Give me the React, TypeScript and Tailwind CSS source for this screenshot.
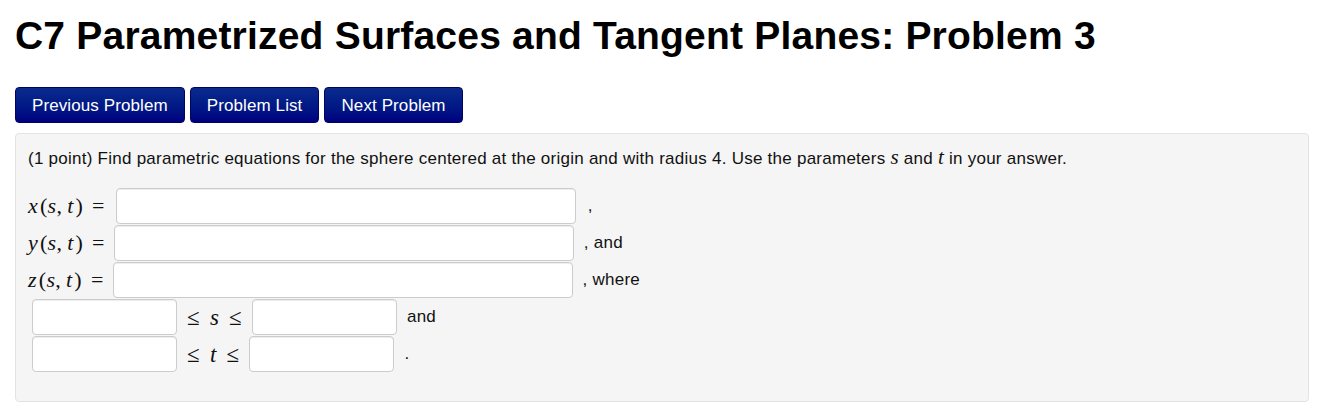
import React from "react"

const inputCls =
    "h-[36px] rounded-[4px] border border-[#cccccc] bg-white shadow-[inset_0_1px_1px_rgba(0,0,0,0.075)] outline-none"

const btnCls =
    "h-[36px] px-4 rounded-[4px] border border-[#00045c] bg-gradient-to-b from-[#0b2a8c] to-[#000080] text-white text-[17px] tracking-[0.1px] leading-none"

const mathCls = "font-['Liberation_Serif',serif] text-[22px] text-[#111] whitespace-nowrap leading-none"

function MathVar({ v }: { v: string }) {
    return <span className="italic">{v}</span>
}

function FuncLabel({ name }: { name: string }) {
    return (
        <span className={mathCls}>
            <MathVar v={name} />
            <span className="ml-[2px]">(</span>
            <MathVar v="s" />
            <span className="mr-[5px]">,</span>
            <MathVar v="t" />
            <span className="ml-[2px]">)</span>
            <span className="ml-[9px]">=</span>
        </span>
    )
}

function Bound({ v }: { v: string }) {
    return (
        <span className={`${mathCls} mx-[10px] text-[23px]`}>
            ≤<span className="mx-[10px]"><MathVar v={v} /></span>≤
        </span>
    )
}

export default function App() {
    return (
        <div className="min-h-[417px] bg-white font-['Liberation_Sans',Arial,sans-serif] text-[#000] pl-[15px]">
            <h1 className="pt-[15px] text-[39px] font-bold leading-[42px] tracking-[0.2px]">
                C7 Parametrized Surfaces and Tangent Planes: Problem 3
            </h1>

            <div className="mt-[30px] flex gap-[5px]">
                <button className={btnCls}>Previous Problem</button>
                <button className={btnCls}>Problem List</button>
                <button className={btnCls}>Next Problem</button>
            </div>

            <div className="mt-[10px] w-[1294px] h-[269px] rounded-[4px] border border-[#e3e3e3] bg-[#f5f5f5] px-[12px] pt-[13px] text-[17px] tracking-[0.25px] text-[#111]">
                <p className="leading-[20px]">
                    (1 point) Find parametric equations for the sphere centered at the origin and with radius 4. Use the parameters{" "}
                    <span className="font-['Liberation_Serif',serif] italic text-[21px]">s</span> and{" "}
                    <span className="font-['Liberation_Serif',serif] italic text-[21px]">t</span> in your answer.
                </p>

                <div className="mt-[19px] flex flex-col gap-[1px]">
                    <div className="flex items-center">
                        <FuncLabel name="x" />
                        <input className={`${inputCls} ml-[11px] w-[460px]`} />
                        <span className="ml-[12px]">,</span>
                    </div>
                    <div className="flex items-center">
                        <FuncLabel name="y" />
                        <input className={`${inputCls} ml-[9px] w-[460px]`} />
                        <span className="ml-[10px]">, and</span>
                    </div>
                    <div className="flex items-center">
                        <FuncLabel name="z" />
                        <input className={`${inputCls} ml-[9px] w-[460px]`} />
                        <span className="ml-[10px]">, where</span>
                    </div>
                    <div className="flex items-center pl-[4px]">
                        <input className={`${inputCls} w-[145px]`} />
                        <Bound v="s" />
                        <input className={`${inputCls} w-[145px]`} />
                        <span className="ml-[10px]">and</span>
                    </div>
                    <div className="flex items-center pl-[4px]">
                        <input className={`${inputCls} w-[145px]`} />
                        <Bound v="t" />
                        <input className={`${inputCls} w-[145px]`} />
                        <span className="ml-[10px]">.</span>
                    </div>
                </div>
            </div>
        </div>
    )
}
